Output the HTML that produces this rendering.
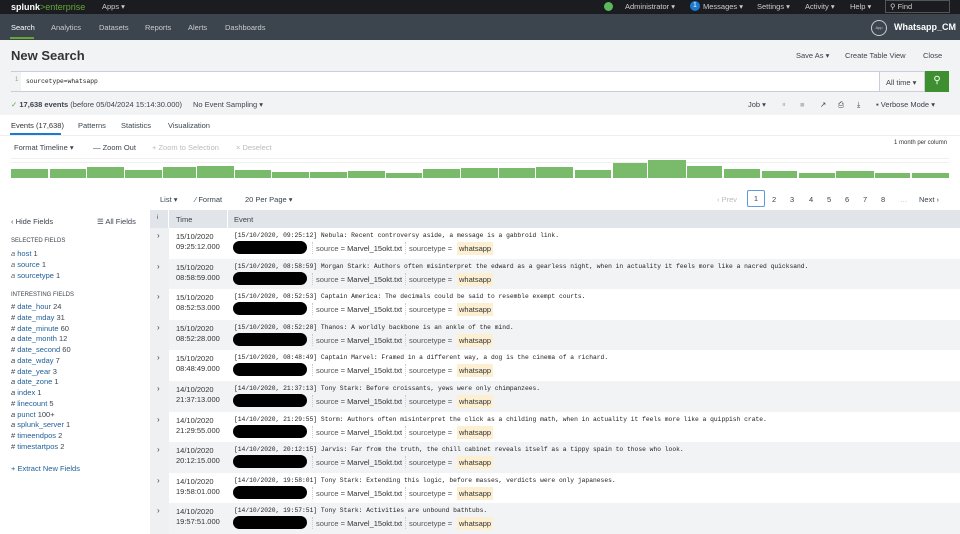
<!DOCTYPE html>
<html><head><meta charset="utf-8"><style>
*{margin:0;padding:0;box-sizing:border-box}
body{width:960px;height:533px;overflow:hidden;background:#fff;font-family:"Liberation Sans",sans-serif;font-size:7.5px;color:#3c444d;position:relative}
.a{position:absolute;white-space:nowrap}
.mono{font-family:"Liberation Mono",monospace;font-size:6.3px;color:#222}
.lnk{color:#1e5f98}
.gr{color:#5c6773}
</style></head><body>
<div class="a" style="left:0;top:0;width:960px;height:14px;background:#1a1c20"></div>
<div class="a" style="left:11px;top:2px;font-size:9px;color:#fff;font-weight:bold">splunk<span style="color:#65a637;font-weight:normal">&gt;enterprise</span></div>
<div class="a" style="left:102px;top:2px;font-size:7.5px;color:#ccc">Apps ▾</div>
<div class="a" style="left:604px;top:2px;width:9px;height:9px;border-radius:50%;background:#5cb85c"></div>
<div class="a" style="left:625px;top:2px;color:#ccc">Administrator ▾</div>
<div class="a" style="left:690px;top:1px;width:10px;height:10px;border-radius:50%;background:#1c7ad0;color:#fff;font-size:7px;text-align:center;line-height:10px">1</div>
<div class="a" style="left:703px;top:2px;color:#ccc">Messages ▾</div>
<div class="a" style="left:757px;top:2px;color:#ccc">Settings ▾</div>
<div class="a" style="left:805px;top:2px;color:#ccc">Activity ▾</div>
<div class="a" style="left:850px;top:2px;color:#ccc">Help ▾</div>
<div class="a" style="left:885px;top:0px;width:65px;height:13px;border:1px solid #555;color:#ccc;padding:1px 4px">&#9906; Find</div>
<div class="a" style="left:0;top:14px;width:960px;height:26px;background:#3c444d"></div>
<div class="a" style="left:11px;top:23px;color:#fff">Search</div>
<div class="a" style="left:10px;top:37px;width:24px;height:2px;background:#65a637"></div>
<div class="a" style="left:51px;top:23px;color:#ccc">Analytics</div>
<div class="a" style="left:99px;top:23px;color:#ccc">Datasets</div>
<div class="a" style="left:145px;top:23px;color:#ccc">Reports</div>
<div class="a" style="left:188px;top:23px;color:#ccc">Alerts</div>
<div class="a" style="left:225px;top:23px;color:#ccc">Dashboards</div>
<div class="a" style="left:871px;top:20px;width:16px;height:16px;border:1px solid #ccc;border-radius:50%;color:#ccc;font-size:4px;text-align:center;line-height:14px">App</div>
<div class="a" style="left:894px;top:22px;color:#fff;font-size:9px;font-weight:bold">Whatsapp_CM</div>
<div class="a" style="left:0;top:40px;width:960px;height:75px;background:#f2f3f5"></div>
<div class="a" style="left:11px;top:48px;font-size:13px;font-weight:bold;color:#333">New Search</div>
<div class="a" style="left:796px;top:51px">Save As ▾</div>
<div class="a" style="left:845px;top:51px">Create Table View</div>
<div class="a" style="left:923px;top:51px">Close</div>
<div class="a" style="left:11px;top:71px;width:869px;height:21px;background:#fff;border:1px solid #ccd;"></div>
<div class="a" style="left:11px;top:72px;width:10px;height:19px;background:#f2f3f5"></div>
<div class="a" style="left:15px;top:77px;font-size:6px;color:#999">1</div>
<div class="a mono" style="left:26px;top:78px">sourcetype=whatsapp</div>
<div class="a" style="left:879px;top:71px;width:46px;height:21px;background:#f7f7f8;border:1px solid #ccd;padding:6px 6px">All time ▾</div>
<div class="a" style="left:925px;top:71px;width:24px;height:21px;background:#3e8f2f;color:#fff;font-size:10px;text-align:center;line-height:20px">&#9906;</div>
<div class="a" style="left:11px;top:100px"><span style="color:#65a637">✓</span> <b>17,638 events</b> (before 05/04/2024 15:14:30.000)</div>
<div class="a" style="left:193px;top:100px">No Event Sampling ▾</div>
<div class="a" style="left:748px;top:100px">Job ▾</div>
<div class="a" style="left:782px;top:100px;color:#bbb">⏸</div>
<div class="a" style="left:800px;top:100px;color:#bbb">■</div>
<div class="a" style="left:820px;top:100px">↗</div>
<div class="a" style="left:838px;top:100px">⎙</div>
<div class="a" style="left:857px;top:100px">⤓</div>
<div class="a" style="left:876px;top:100px">▪ Verbose Mode ▾</div>
<div class="a" style="left:11px;top:121px;color:#333">Events (17,638)</div>
<div class="a" style="left:10px;top:133px;width:51px;height:2px;background:#1c7ad0"></div>
<div class="a" style="left:78px;top:121px">Patterns</div>
<div class="a" style="left:121px;top:121px">Statistics</div>
<div class="a" style="left:168px;top:121px">Visualization</div>
<div class="a" style="left:0;top:135px;width:960px;height:1px;background:#eee"></div>
<div class="a" style="left:14px;top:143px">Format Timeline ▾</div>
<div class="a" style="left:93px;top:143px">— Zoom Out</div>
<div class="a" style="left:152px;top:143px;color:#bbb">+ Zoom to Selection</div>
<div class="a" style="left:236px;top:143px;color:#bbb">× Deselect</div>
<div class="a" style="left:894px;top:140px;font-size:6px;color:#333">1 month per column</div>
<div class="a" style="left:11px;top:158px;width:938px;height:1px;background:#f0f0f0"></div>
<div class="a" style="left:11px;top:162px;width:938px;height:1px;background:#f0f0f0"></div>
<svg class="a" style="left:0;top:0" width="960" height="185">
<g fill="#79bb6a">
<rect x="11" y="169" width="37" height="9"/><rect x="50" y="169" width="36" height="9"/><rect x="87" y="167" width="37" height="11"/><rect x="125" y="170" width="37" height="8"/><rect x="163" y="167" width="33" height="11"/><rect x="197" y="166" width="37" height="12"/><rect x="235" y="170" width="36" height="8"/><rect x="272" y="172" width="37" height="6"/><rect x="310" y="172" width="37" height="6"/><rect x="348" y="171" width="37" height="7"/><rect x="386" y="173" width="36" height="5"/><rect x="423" y="169" width="37" height="9"/><rect x="461" y="168" width="37" height="10"/><rect x="499" y="168" width="36" height="10"/><rect x="536" y="167" width="37" height="11"/><rect x="575" y="170" width="36" height="8"/><rect x="613" y="163" width="34" height="15"/><rect x="648" y="160" width="38" height="18"/><rect x="687" y="166" width="35" height="12"/><rect x="724" y="169" width="36" height="9"/><rect x="762" y="171" width="35" height="7"/><rect x="799" y="173" width="36" height="5"/><rect x="836" y="171" width="38" height="7"/><rect x="875" y="173" width="35" height="5"/><rect x="912" y="173" width="37" height="5"/>
</g></svg>
<div class="a" style="left:160px;top:195px">List ▾</div>
<div class="a" style="left:195px;top:195px">⁄ Format</div>
<div class="a" style="left:245px;top:195px">20 Per Page ▾</div>
<div class="a" style="left:717px;top:195px;color:#bbb">‹ Prev</div>
<div class="a" style="left:747px;top:190px;width:18px;height:17px;border:1px solid #5e9ad6;border-radius:2px;text-align:center;line-height:15px">1</div>
<div class="a" style="left:772px;top:195px">2</div>
<div class="a" style="left:790px;top:195px">3</div>
<div class="a" style="left:809px;top:195px">4</div>
<div class="a" style="left:827px;top:195px">5</div>
<div class="a" style="left:845px;top:195px">6</div>
<div class="a" style="left:863px;top:195px">7</div>
<div class="a" style="left:881px;top:195px">8</div>
<div class="a" style="left:900px;top:195px;color:#bbb">…</div>
<div class="a" style="left:919px;top:195px">Next ›</div>
<div class="a" style="left:11px;top:217px">‹ Hide Fields</div>
<div class="a" style="left:97px;top:217px">☰ All Fields</div>
<div class="a" style="left:11px;top:238px;font-size:6px">SELECTED FIELDS</div>
<div class="a" style="left:11px;top:249px;line-height:10.8px"><i class="gr">a</i> <span class="lnk">host</span> 1<br><i class="gr">a</i> <span class="lnk">source</span> 1<br><i class="gr">a</i> <span class="lnk">sourcetype</span> 1</div>
<div class="a" style="left:11px;top:292px;font-size:6px">INTERESTING FIELDS</div>
<div class="a" style="left:11px;top:302px;line-height:10.75px">
# <span class="lnk">date_hour</span> 24<br># <span class="lnk">date_mday</span> 31<br># <span class="lnk">date_minute</span> 60<br><i>a</i> <span class="lnk">date_month</span> 12<br># <span class="lnk">date_second</span> 60<br><i>a</i> <span class="lnk">date_wday</span> 7<br># <span class="lnk">date_year</span> 3<br><i>a</i> <span class="lnk">date_zone</span> 1<br><i>a</i> <span class="lnk">index</span> 1<br># <span class="lnk">linecount</span> 5<br><i>a</i> <span class="lnk">punct</span> 100+<br><i>a</i> <span class="lnk">splunk_server</span> 1<br># <span class="lnk">timeendpos</span> 2<br># <span class="lnk">timestartpos</span> 2</div>
<div class="a lnk" style="left:11px;top:464px">+ Extract New Fields</div>
<div class="a" style="left:150px;top:210px;width:810px;height:18px;background:#e1e5e9"></div>
<div class="a" style="left:168px;top:210px;width:1px;height:18px;background:#fff"></div>
<div class="a" style="left:227px;top:210px;width:1px;height:18px;background:#fff"></div>
<div class="a" style="left:157px;top:215px;font-size:6px">i</div>
<div class="a" style="left:176px;top:215px">Time</div>
<div class="a" style="left:234px;top:215px">Event</div>
<div id="rows"></div>
<script>
var d=[["15/10/2020","09:25:12","Nebula: Recent controversy aside, a message is a gabbroid link."],
["15/10/2020","08:58:59","Morgan Stark: Authors often misinterpret the edward as a gearless night, when in actuality it feels more like a nacred quicksand."],
["15/10/2020","08:52:53","Captain America: The decimals could be said to resemble exempt courts."],
["15/10/2020","08:52:28","Thanos: A worldly backbone is an ankle of the mind."],
["15/10/2020","08:48:49","Captain Marvel: Framed in a different way, a dog is the cinema of a richard."],
["14/10/2020","21:37:13","Tony Stark: Before croissants, yews were only chimpanzees."],
["14/10/2020","21:29:55","Storm: Authors often misinterpret the click as a childing math, when in actuality it feels more like a quippish crate."],
["14/10/2020","20:12:15","Jarvis: Far from the truth, the chill cabinet reveals itself as a tippy spain to those who look."],
["14/10/2020","19:58:01","Tony Stark: Extending this logic, before masses, verdicts were only japaneses."],
["14/10/2020","19:57:51","Tony Stark: Activities are unbound bathtubs."]];
var h="";
d.forEach(function(r,i){var t=228+i*30.6;var bg=i%2?"#f2f3f5":"#fff";
h+='<div class="a" style="left:150px;top:'+t+'px;width:810px;height:30.6px;background:'+bg+'"></div>';
h+='<div class="a" style="left:150px;top:'+t+'px;width:19px;height:30.6px;background:#eef0f2"></div>';
h+='<div class="a" style="left:157px;top:'+(t+3)+'px;font-size:8px">›</div>';
h+='<div class="a" style="left:176px;top:'+(t+4)+'px;color:#333;line-height:10px">'+r[0]+'<br>'+r[1]+'.000</div>';
var s=r[2].replace(/ /g,"&nbsp;");
h+='<div class="a mono" style="left:234px;top:'+(t+4)+'px">['+r[0]+',&nbsp;'+r[1]+']&nbsp;'+s+'</div>';
h+='<div class="a" style="left:233px;top:'+(t+13)+'px;width:74px;height:13px;border-radius:7px;background:#000"></div>';
h+='<div class="a" style="left:312px;top:'+(t+14)+'px;width:1px;height:12px;border-left:1px dotted #ccc"></div>';
h+='<div class="a" style="left:316px;top:'+(t+16)+'px;color:#555">source = <span style="color:#333">Marvel_15okt.txt</span></div>';
h+='<div class="a" style="left:405px;top:'+(t+14)+'px;width:1px;height:12px;border-left:1px dotted #ccc"></div>';
h+='<div class="a" style="left:409px;top:'+(t+16)+'px;color:#555">sourcetype = </div>';
h+='<div class="a" style="left:457px;top:'+(t+14)+'px;background:#fcefd2;padding:2px 2px;color:#333">whatsapp</div>';});
document.getElementById("rows").innerHTML=h;
</script>
</body></html>
